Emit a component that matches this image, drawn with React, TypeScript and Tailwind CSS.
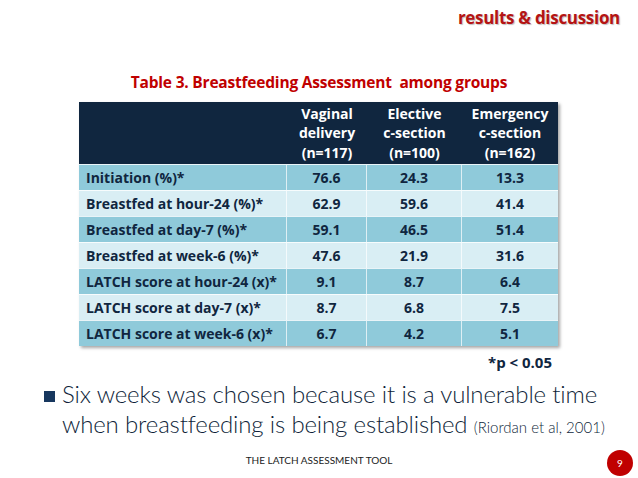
import React from "react";

const rows: [string, string, string, string][] = [
  ["Initiation (%)*", "76.6", "24.3", "13.3"],
  ["Breastfed at hour-24 (%)*", "62.9", "59.6", "41.4"],
  ["Breastfed at day-7 (%)*", "59.1", "46.5", "51.4"],
  ["Breastfed at week-6 (%)*", "47.6", "21.9", "31.6"],
  ["LATCH score at hour-24 (x)*", "9.1", "8.7", "6.4"],
  ["LATCH score at day-7 (x)*", "8.7", "6.8", "7.5"],
  ["LATCH score at week-6 (x)*", "6.7", "4.2", "5.1"],
];

export default function App() {
  return (
    <div className="w-[638px] h-[478px] bg-white relative overflow-hidden font-['Open_Sans',sans-serif]">
      <div className="flex justify-end pr-[18px] pt-[6px]">
        <span className="text-[#b51414] font-bold text-[17px] leading-[24px] tracking-[-0.3px] [text-shadow:1px_1px_1px_rgba(0,0,0,0.25)]">
          results &amp; discussion
        </span>
      </div>
      <div className="mt-[41px] text-center text-[#c00000] font-bold text-[15.5px] leading-[22px] tracking-[-0.2px]">
        Table 3. Breastfeeding Assessment&nbsp; among groups
      </div>
      <div className="ml-[79px] mt-[9px] w-[479px] shadow-[2px_2px_3px_rgba(0,0,0,0.35)]">
        <div className="grid grid-cols-[208px_80px_95px_96px] bg-[#10263f] h-[62px] text-white font-bold text-[14px] leading-[19.5px] text-center items-center">
          <div></div>
          <div>Vaginal<br />delivery<br />(n=117)</div>
          <div>Elective<br />c-section<br />(n=100)</div>
          <div>Emergency<br />c-section<br />(n=162)</div>
        </div>
        {rows.map((r, i) => (
          <div
            key={i}
            className={
              "grid grid-cols-[208px_80px_95px_96px] h-[26px] border-t border-white/80 text-[#10263f] font-bold text-[14px] items-center " +
              (i % 2 === 0 ? "bg-[#8fcada]" : "bg-[#d9eef4]")
            }
          >
            <div className="pl-[7px] h-full flex items-center border-r border-white/70">{r[0]}</div>
            <div className="h-full flex items-center justify-center border-r border-white/70">{r[1]}</div>
            <div className="h-full flex items-center justify-center border-r border-white/70">{r[2]}</div>
            <div className="h-full flex items-center justify-center">{r[3]}</div>
          </div>
        ))}
      </div>
      <div className="flex justify-end pr-[86px] mt-[6px] text-[#10263f] font-bold text-[15px] leading-[20px]">
        *p &lt; 0.05
      </div>
      <div className="flex ml-[44px] mt-[7px] text-[#0f1f3a] font-['Lato',sans-serif]">
        <div className="w-[11px] h-[11px] bg-[#17375e] mt-[12px] mr-[7px] shrink-0"></div>
        <div className="text-[24px] leading-[30px] font-light tracking-[-0.15px]">
          Six weeks was chosen because it is a vulnerable time
          <br />
          when breastfeeding is being established{" "}
          <span className="text-[15px] tracking-normal">(Riordan et al, 2001)</span>
        </div>
      </div>
      <div className="absolute left-0 right-0 top-[453px] text-center text-[10px] text-[#222] font-['Lato',sans-serif]">
        THE LATCH ASSESSMENT TOOL
      </div>
      <div className="absolute left-[607px] top-[450px] w-[26px] h-[26px] rounded-full bg-[#c00000] text-white text-[10px] flex items-center justify-center font-['Lato',sans-serif]">
        9
      </div>
    </div>
  );
}
